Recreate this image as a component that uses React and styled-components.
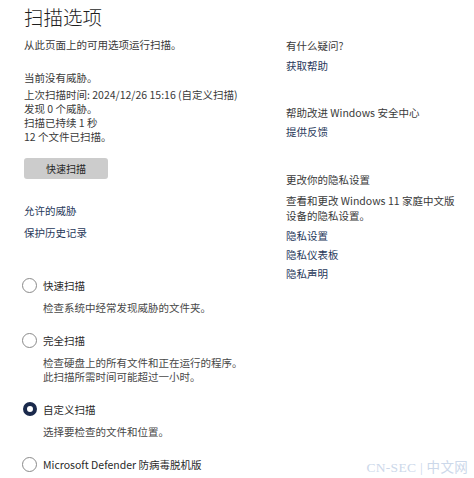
import React from "react";
import styled, { createGlobalStyle } from "styled-components";

const Global = createGlobalStyle`
  html, body { margin: 0; padding: 0; background: #fff; }
  body {
    font-family: "Noto Sans CJK SC", "Noto Sans", sans-serif;
    color: #3a3a3a;
    -webkit-font-smoothing: antialiased;
  }
`;

const Page = styled.div`
  position: relative;
  width: 474px;
  height: 478px;
  overflow: hidden;
  display: grid;
  grid-template-columns: 262px 1fr;
  padding-left: 24px;
  box-sizing: border-box;
`;

const Left = styled.div`
  display: flex;
  flex-direction: column;
  align-items: flex-start;
`;

const Right = styled.div`
  display: flex;
  flex-direction: column;
  align-items: flex-start;
  padding-top: 38px;
`;

const Title = styled.h1`
  margin: 3px 0 0;
  font-size: 19.5px;
  font-weight: 300;
  line-height: 28px;
  color: #1e1e1e;
`;

const Text = styled.p`
  margin: ${(p) => p.$mt || 0}px 0 0;
  font-size: 10.5px;
  line-height: ${(p) => p.$lh || 16}px;
  color: ${(p) => p.$color || "#3a3a3a"};
  white-space: nowrap;
`;

const Link = styled.a`
  display: block;
  margin-top: ${(p) => p.$mt || 0}px;
  font-size: 10.5px;
  line-height: 16px;
  color: #27385a;
  text-decoration: none;
  white-space: nowrap;
`;

const Button = styled.button`
  margin-top: 14px;
  width: 84px;
  height: 21px;
  border: none;
  border-radius: 3px;
  background: #cccccc;
  font-family: inherit;
  font-size: 10px;
  color: #262626;
  padding: 0;
`;

const Options = styled.div`
  margin-top: 35px;
  display: flex;
  flex-direction: column;
  gap: 16px;
`;

const Option = styled.div`
  display: flex;
  flex-direction: column;
`;

const OptionRow = styled.label`
  display: flex;
  align-items: center;
  height: 18px;
  gap: 6px;
  font-size: 10.5px;
  color: #2a2a2a;
  white-space: nowrap;
`;

const Radio = styled.span`
  box-sizing: border-box;
  width: ${(p) => (p.$checked ? 14 : 15)}px;
  height: ${(p) => (p.$checked ? 14 : 15)}px;
  margin-left: ${(p) => (p.$checked ? -1 : -2)}px;
  border-radius: 50%;
  border: ${(p) => (p.$checked ? "4px solid #1b2a4c" : "1px solid #8a8a8a")};
  background: #fff;
  flex-shrink: 0;
`;

const Desc = styled.p`
  margin: 7px 0 0 19px;
  font-size: 10.5px;
  line-height: 14px;
  color: #484848;
  white-space: nowrap;
`;

const Watermark = styled.div`
  position: absolute;
  right: 6px;
  bottom: 2px;
  font-family: "Liberation Serif", "Noto Sans CJK SC", serif;
  font-size: 13.5px;
  color: #ccd8ea;
  letter-spacing: 0.3px;
`;

const options = [
  { label: "快速扫描", desc: ["检查系统中经常发现威胁的文件夹。"] },
  { label: "完全扫描", desc: ["检查硬盘上的所有文件和正在运行的程序。", "此扫描所需时间可能超过一小时。"] },
  { label: "自定义扫描", desc: ["选择要检查的文件和位置。"], checked: true },
  { label: "Microsoft Defender 防病毒脱机版", desc: [] },
];

export default function App() {
  return (
    <>
      <Global />
      <Page>
        <Left>
          <Title>扫描选项</Title>
          <Text $mt={6}>从此页面上的可用选项运行扫描。</Text>
          <Text $mt={17}>当前没有威胁。</Text>
          <Text $mt={2} $lh={14}>
            上次扫描时间: 2024/12/26 15:16 (自定义扫描)
            <br />
            发现 0 个威胁。
            <br />
            扫描已持续 1 秒
            <br />
            12 个文件已扫描。
          </Text>
          <Button>快速扫描</Button>
          <Link $mt={24}>允许的威胁</Link>
          <Link $mt={6}>保护历史记录</Link>
          <Options>
            {options.map((o) => (
              <Option key={o.label}>
                <OptionRow>
                  <Radio $checked={o.checked} />
                  {o.label}
                </OptionRow>
                {o.desc.length > 0 && (
                  <Desc>
                    {o.desc.map((d, i) => (
                      <React.Fragment key={i}>
                        {i > 0 && <br />}
                        {d}
                      </React.Fragment>
                    ))}
                  </Desc>
                )}
              </Option>
            ))}
          </Options>
        </Left>
        <Right>
          <Text>有什么疑问?</Text>
          <Link $mt={4}>获取帮助</Link>
          <Text $mt={31}>帮助改进 Windows 安全中心</Text>
          <Link $mt={3}>提供反馈</Link>
          <Text $mt={32}>更改你的隐私设置</Text>
          <Text $mt={5} $lh={15}>
            查看和更改 Windows 11 家庭中文版
            <br />
            设备的隐私设置。
          </Text>
          <Link $mt={5}>隐私设置</Link>
          <Link $mt={3}>隐私仪表板</Link>
          <Link $mt={3}>隐私声明</Link>
        </Right>
        <Watermark>CN-SEC | 中文网</Watermark>
      </Page>
    </>
  );
}
